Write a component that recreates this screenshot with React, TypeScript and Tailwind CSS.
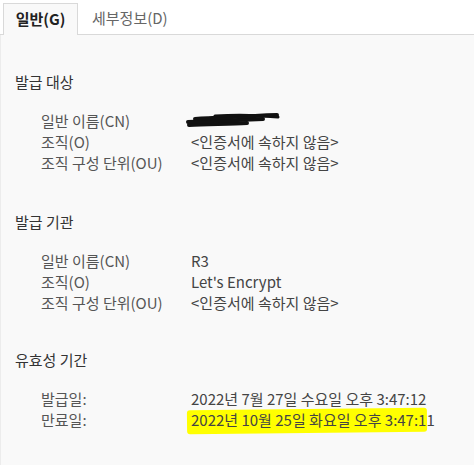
import React from 'react'

const font = { fontFamily: '"Noto Sans CJK KR", "Noto Sans", sans-serif' }

interface Row {
    label: string
    value: React.ReactNode
}

function Scribble() {
    return (
        <svg width="96" height="16" viewBox="0 0 96 16" aria-hidden className="block">
            <path d="M4 13 C22 12, 45 12, 62 11" stroke="#111" strokeWidth="4" fill="none" strokeLinecap="round" />
            <path d="M3 10 C25 9, 50 8, 78 7" stroke="#111" strokeWidth="4" fill="none" strokeLinecap="round" />
            <path d="M10 7 C35 6, 60 4, 92 3" stroke="#111" strokeWidth="4" fill="none" strokeLinecap="round" />
            <path d="M30 4 C50 3, 70 3, 93 5" stroke="#111" strokeWidth="3" fill="none" strokeLinecap="round" />
        </svg>
    )
}

function Section({ title, rows, className }: { title: string; rows: Row[]; className?: string }) {
    return (
        <section className={className}>
            <h2 className="pl-[14px] text-[15px] leading-[21px] text-[#333]">{title}</h2>
            <ul className="mt-[19px]">
                {rows.map((row) => (
                    <li key={row.label} className="flex h-[21px] items-center text-[15px] text-[#555]">
                        <span className="w-[190px] shrink-0 pl-[40px]">{row.label}</span>
                        <span className="min-w-0 text-[#444]">{row.value}</span>
                    </li>
                ))}
            </ul>
        </section>
    )
}

export default function App() {
    const notIncluded = '<인증서에 속하지 않음>'
    return (
        <div className="h-[465px] w-[474px] overflow-hidden bg-white" style={font}>
            <div className="flex h-[35px] items-end border-b border-[#d9d9d9] pl-[3px]">
                <div className="-mb-px flex h-[32px] w-[75px] items-center justify-center border border-b-0 border-[#d9d9d9] bg-[#f9f9f9] text-[15px] font-bold text-[#222]">
                    일반(G)
                </div>
                <div className="flex h-[32px] items-center pl-[14px] text-[15px] text-[#666]">세부정보(D)</div>
            </div>
            <div className="h-[430px] border-l border-[#ececec] bg-[#f9f9f9] pt-[36px]">
                <Section
                    title="발급 대상"
                    rows={[
                        { label: '일반 이름(CN)', value: <span className="-ml-[6px] -mt-[4px] block"><Scribble /></span> },
                        { label: '조직(O)', value: notIncluded },
                        { label: '조직 구성 단위(OU)', value: notIncluded },
                    ]}
                />
                <Section
                    className="mt-[37px]"
                    title="발급 기관"
                    rows={[
                        { label: '일반 이름(CN)', value: 'R3' },
                        { label: '조직(O)', value: "Let's Encrypt" },
                        { label: '조직 구성 단위(OU)', value: notIncluded },
                    ]}
                />
                <Section
                    className="mt-[35px]"
                    title="유효성 기간"
                    rows={[
                        { label: '발급일:', value: '2022년 7월 27일 수요일 오후 3:47:12' },
                        {
                            label: '만료일:',
                            value: (
                                <span className="relative">
                                    <span className="absolute -left-[4px] top-[0px] h-[24px] w-[240px] -rotate-[0.6deg] rounded-[3px] bg-[#ffff00]" />
                                    <span className="relative">2022년 10월 25일 화요일 오후 3:47:11</span>
                                </span>
                            ),
                        },
                    ]}
                />
            </div>
        </div>
    )
}
